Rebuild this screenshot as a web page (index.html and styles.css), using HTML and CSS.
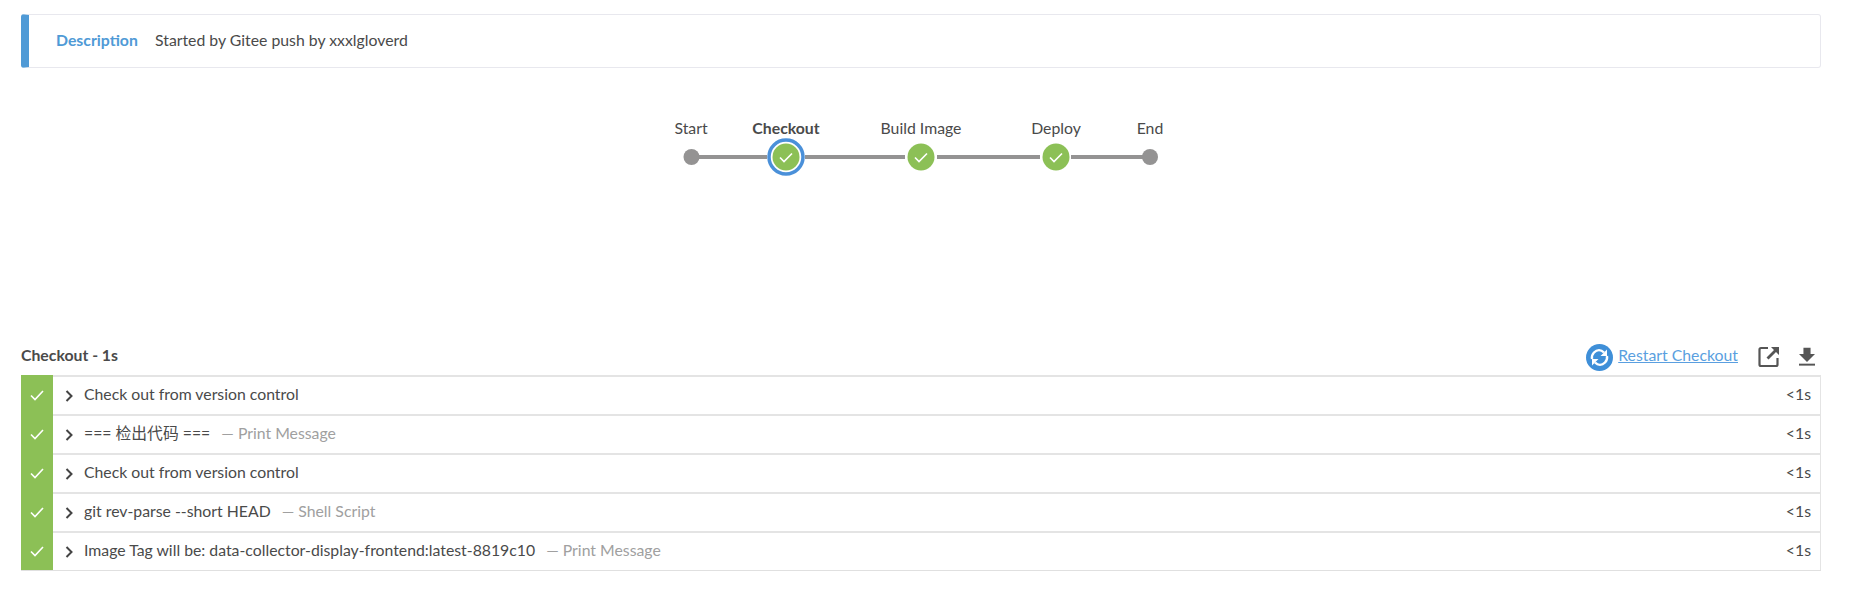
FILE: index.html
```html
<!DOCTYPE html>
<html lang="en">
<head>
    <meta charset="UTF-8">
    <title>Checkout</title>
    <link rel="stylesheet" href="styles.css">
</head>
<body>
    <div class="description">
        <span class="desc-label">Description</span>
        <span class="desc-text">Started by Gitee push by xxxlgloverd</span>
    </div>

    <div class="graph-wrap">
        <svg class="graph" width="1800" height="110" viewBox="21 100 1800 110" xmlns="http://www.w3.org/2000/svg">
            <g class="lines">
                <line x1="691" y1="157" x2="767" y2="157"></line>
                <line x1="805" y1="157" x2="905" y2="157"></line>
                <line x1="937" y1="157" x2="1040" y2="157"></line>
                <line x1="1071" y1="157" x2="1150" y2="157"></line>
            </g>
            <circle class="dot" cx="691.500" cy="157" r="8"></circle>
            <circle class="dot" cx="1150" cy="157" r="8"></circle>

            <circle class="selected" cx="786" cy="157" r="17"></circle>
            <circle class="ok" cx="786" cy="157" r="13.500"></circle>
            <path class="tick" d="M780 157.500l4 4 8-8"></path>

            <circle class="ok" cx="921" cy="157" r="13.500"></circle>
            <path class="tick" d="M915 157.500l4 4 8-8"></path>

            <circle class="ok" cx="1056" cy="157" r="13.500"></circle>
            <path class="tick" d="M1050 157.500l4 4 8-8"></path>

            <text x="691" y="134">Start</text>
            <text class="bold" x="786" y="134">Checkout</text>
            <text x="921" y="134">Build Image</text>
            <text x="1056" y="134">Deploy</text>
            <text x="1150" y="134">End</text>
        </svg>
    </div>

    <div class="step-head">
        <div class="step-title">Checkout - 1s</div>
        <div class="step-actions">
            <span class="restart-icon">
                <svg width="27" height="27" viewBox="0 0 27 27" xmlns="http://www.w3.org/2000/svg">
                    <circle cx="13.500" cy="13.500" r="13.500" fill="#3f8fd8"></circle>
                    <path d="M6 15a7.500 7.500 0 0 1 2-6.500c3-3 7-3 10 0" fill="none" stroke="#fff" stroke-width="2.400"></path>
                    <path d="M21 5.500v6.500h-6.500z" fill="#fff"></path>
                    <path d="M21 12a7.500 7.500 0 0 1-2 6.500c-3 3-7 3-10 0" fill="none" stroke="#fff" stroke-width="2.400"></path>
                    <path d="M6 21.500v-6.500h6.500z" fill="#fff"></path>
                </svg>
            </span>
            <a class="restart-link" href="#">Restart Checkout</a>
            <svg class="open-icon" width="22" height="22" viewBox="0 0 22 22" xmlns="http://www.w3.org/2000/svg">
                <path d="M10 2H3a1.500 1.500 0 0 0-1.500 1.500v15A1.500 1.500 0 0 0 3 20h15a1.500 1.500 0 0 0 1.500-1.500V12" fill="none" stroke="#555" stroke-width="2.200"></path>
                <path d="M13 1h8v8l-3-3-7.500 7.500-2-2L16 4z" fill="#555"></path>
            </svg>
            <svg class="save-icon" width="16" height="20" viewBox="0 0 18 21" xmlns="http://www.w3.org/2000/svg">
                <path d="M5 0h8v7h5l-9 9-9-9h5z" fill="#555"></path>
                <rect x="0" y="18" width="18" height="2.200" fill="#555"></rect>
            </svg>
        </div>
    </div>

    <div class="steps">
        <div class="step">
            <div class="status"><svg width="16" height="12" viewBox="0 0 16 12"><path d="M2 6.500l4 4 8-8.500"></path></svg></div>
            <div class="chevron"><svg width="9" height="12" viewBox="0 0 9 12"><path d="M1.500 1l5 5-5 5"></path></svg></div>
            <div class="name">Check out from version control</div>
            <div class="time">&lt;1s</div>
        </div>
        <div class="step">
            <div class="status"><svg width="16" height="12" viewBox="0 0 16 12"><path d="M2 6.500l4 4 8-8.500"></path></svg></div>
            <div class="chevron"><svg width="9" height="12" viewBox="0 0 9 12"><path d="M1.500 1l5 5-5 5"></path></svg></div>
            <div class="name">=== 检出代码 === <span class="kind">— Print Message</span></div>
            <div class="time">&lt;1s</div>
        </div>
        <div class="step">
            <div class="status"><svg width="16" height="12" viewBox="0 0 16 12"><path d="M2 6.500l4 4 8-8.500"></path></svg></div>
            <div class="chevron"><svg width="9" height="12" viewBox="0 0 9 12"><path d="M1.500 1l5 5-5 5"></path></svg></div>
            <div class="name">Check out from version control</div>
            <div class="time">&lt;1s</div>
        </div>
        <div class="step">
            <div class="status"><svg width="16" height="12" viewBox="0 0 16 12"><path d="M2 6.500l4 4 8-8.500"></path></svg></div>
            <div class="chevron"><svg width="9" height="12" viewBox="0 0 9 12"><path d="M1.500 1l5 5-5 5"></path></svg></div>
            <div class="name">git rev-parse --short HEAD <span class="kind">— Shell Script</span></div>
            <div class="time">&lt;1s</div>
        </div>
        <div class="step">
            <div class="status"><svg width="16" height="12" viewBox="0 0 16 12"><path d="M2 6.500l4 4 8-8.500"></path></svg></div>
            <div class="chevron"><svg width="9" height="12" viewBox="0 0 9 12"><path d="M1.500 1l5 5-5 5"></path></svg></div>
            <div class="name">Image Tag will be: data-collector-display-frontend:latest-8819c10 <span class="kind">— Print Message</span></div>
            <div class="time">&lt;1s</div>
        </div>
    </div>
</body>
</html>
```

FILE: styles.css
```css
body {
    margin: 0;
    padding: 14px 35px 0 21px;
    background-color: white;
    color: #4a4a4a;
    font-family: Lato, "Noto Sans CJK SC", sans-serif;
    font-size: 15.800px;
}

.description {
    display: flex;
    align-items: center;
    height: 54px;
    box-sizing: border-box;
    padding-left: 27px;
    padding-bottom: 4px;
    border: 1px solid #e8e8ee;
    border-left: 8px solid #4f9ad6;
    border-radius: 3px;
}

.desc-label {
    width: 99px;
    color: #4f9ad6;
    font-weight: bold;
}

.graph-wrap {
    height: 273px;
    padding-top: 32px;
    box-sizing: border-box;
}

.graph text {
    fill: #4a4a4a;
    font-size: 15.800px;
    text-anchor: middle;
}

.graph text.bold {
    font-weight: bold;
}

.lines line {
    stroke: #949393;
    stroke-width: 4;
}

.dot {
    fill: #949393;
}

.ok {
    fill: #8cc056;
}

.selected {
    fill: white;
    stroke: #4a90d9;
    stroke-width: 3.500;
}

.tick {
    fill: none;
    stroke: white;
    stroke-width: 1.600;
}

.step-head {
    display: flex;
    justify-content: space-between;
    align-items: center;
    height: 34px;
    padding-right: 6px;
    box-sizing: border-box;
}

.step-title {
    font-weight: bold;
    margin-top: -7px;
}

.step-actions {
    display: flex;
    align-items: center;
    margin-top: -2px;
}

.restart-icon {
    display: flex;
    margin-right: 5px;
}

.restart-link {
    margin-top: -5px;
    margin-right: -1px;
    color: #5a9fe0;
}

.open-icon {
    margin-left: 21px;
}

.save-icon {
    margin-left: 19px;
}

.steps {
    border-bottom: 1px solid #e0e0e0;
}

.step {
    display: flex;
    align-items: center;
    height: 39px;
    border-top: 2px solid #e4e4e4;
    border-right: 1px solid #e4e4e4;
    box-sizing: border-box;
}

.status {
    display: flex;
    align-items: center;
    justify-content: center;
    width: 32px;
    height: 39px;
    margin-top: -2px;
    background-color: #8cc056;
}

.status path {
    fill: none;
    stroke: white;
    stroke-width: 1.600;
}

.chevron {
    display: flex;
    margin-left: 12px;
    margin-right: 10px;
}

.chevron path {
    fill: none;
    stroke: #444;
    stroke-width: 2;
}

.name {
    flex: 1;
    margin-top: -5px;
}

.kind {
    margin-left: 7px;
    color: #a0a0a0;
}

.time {
    margin-top: -4px;
    padding-right: 9px;
}
```
